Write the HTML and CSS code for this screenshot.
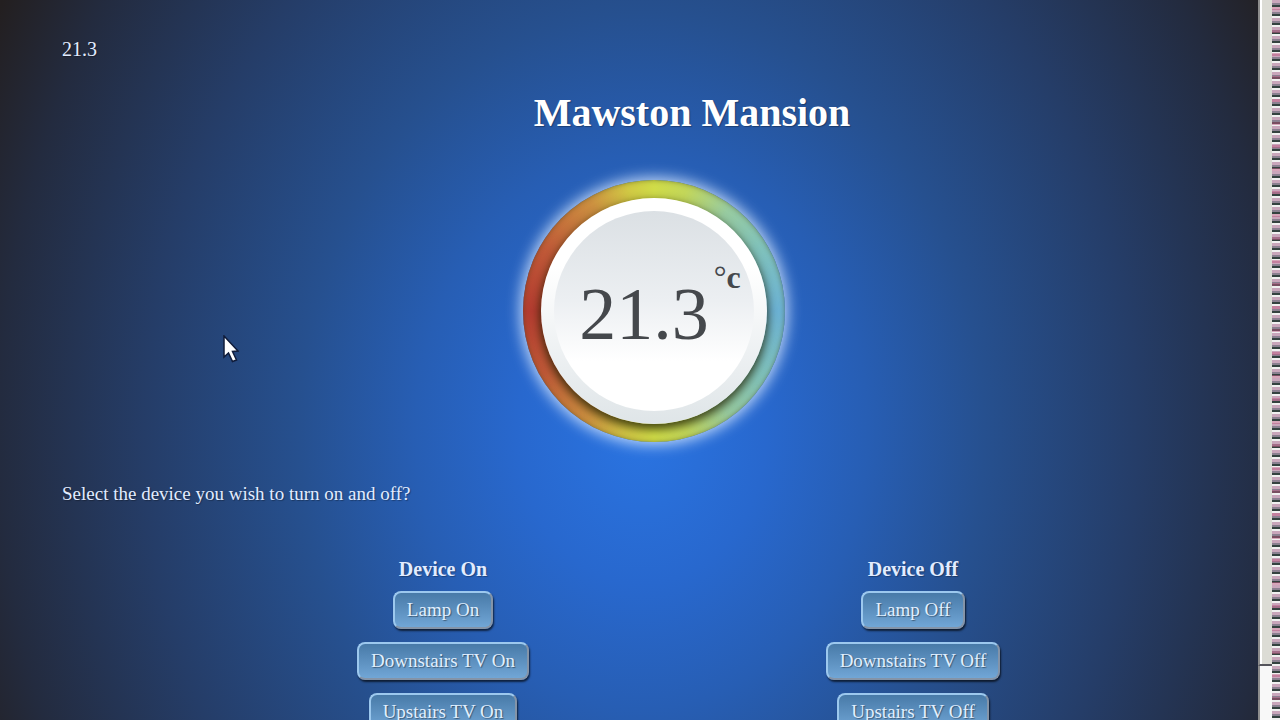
FILE: index.html
```
<!DOCTYPE html>
<html lang="en">
<head>
    <meta charset="UTF-8">
    <title>Mawston Mansion</title>
    <link rel="stylesheet" href="styles.css">
</head>
<body>
    <main class="page">
        <div class="reading">21.3</div>

        <h1 class="title">Mawston Mansion</h1>

        <div class="gauge">
            <div class="dial">
                <div class="face">
                    <span class="temp">21.3</span>
                    <span class="unit">&deg;<b>c</b></span>
                </div>
            </div>
        </div>

        <p class="question">Select the device you wish to turn on and off?</p>

        <table class="devices">
            <thead>
                <tr>
                    <th>Device On</th>
                    <th>Device Off</th>
                </tr>
            </thead>
            <tbody>
                <tr>
                    <td><button type="button">Lamp On</button></td>
                    <td><button type="button">Lamp Off</button></td>
                </tr>
                <tr>
                    <td><button type="button">Downstairs TV On</button></td>
                    <td><button type="button">Downstairs TV Off</button></td>
                </tr>
                <tr>
                    <td><button type="button">Upstairs TV On</button></td>
                    <td><button type="button">Upstairs TV Off</button></td>
                </tr>
            </tbody>
        </table>
    </main>

    <div class="scrollbar">
        <div class="thumb"></div>
        <div class="track"></div>
    </div>
    <div class="edge"></div>

    <svg class="cursor" width="16" height="28" viewBox="0 0 16 28">
        <path d="M1 1 L1 22 L5.5 18 L9.5 26.5 L13.5 25 L9.5 16.5 L15 16 Z" fill="#fff" stroke="#101c3a" stroke-width="1.5"/>
    </svg>
</body>
</html>
```
FILE: styles.css
```
body {
    margin: 0;
    height: 100vh;
    display: flex;
    overflow: hidden;
    font-family: "Liberation Serif", "Times New Roman", serif;
    font-size: 19px;
    color: #e2ecff;
    text-shadow: 1px 1px 1px rgba(0, 0, 0, 0.3);
}

.page {
    flex: 1;
    box-sizing: border-box;
    padding: 37px 12px 0 62px;
    background: radial-gradient(ellipse 58% 124% at 51% 60%, #2a74e2 0%, #2868ce 17%, #275eb4 31%, #26508f 47%, #253d68 68%, #232b3f 88%, #231f20 100%);
}

.reading {
    font-size: 20px;
    line-height: 24px;
}

.title {
    margin: 29px 0 0 0;
    padding-left: 76px;
    font-size: 40px;
    line-height: 46px;
    text-align: center;
    color: #fff;
}

/* coloured ring */
.gauge {
    width: 262px;
    height: 262px;
    margin: 44px auto 0;
    display: flex;
    align-items: center;
    justify-content: center;
    border-radius: 50%;
    background: conic-gradient(#d0dc48 0deg, #c2d65a 15deg, #98cba0 36deg, #80c2bc 60deg, #6cb2d4 90deg, #80c2bc 120deg, #98cba0 144deg, #c2d65a 165deg, #d0dc48 180deg, #d0c244 194deg, #cc9040 212deg, #c05a38 240deg, #b43c30 270deg, #c05a38 300deg, #cc9040 330deg, #d0c844 348deg, #d0dc48 360deg);
    box-shadow: 0 0 14px 3px rgba(215, 232, 255, 0.85), inset 0 0 5px rgba(60, 60, 20, 0.5);
}

.dial {
    width: 226px;
    height: 226px;
    display: flex;
    align-items: center;
    justify-content: center;
    border-radius: 50%;
    background: linear-gradient(#fff 0%, #fff 30%, #dfe5e8 100%);
    box-shadow: 0 4px 10px 1px rgba(30, 30, 0, 0.8);
}

.face {
    width: 200px;
    height: 200px;
    box-sizing: border-box;
    padding: 0 0 10px 12px;
    display: flex;
    align-items: center;
    justify-content: center;
    gap: 5px;
    border-radius: 50%;
    background: linear-gradient(#dbe0e4 0%, #eceff2 45%, #fff 75%);
    color: #45484c;
    text-shadow: none;
}

.temp {
    margin-top: 16px;
    font-size: 74px;
    line-height: 74px;
}

.unit {
    margin-bottom: 59px;
    font-size: 32px;
    line-height: 32px;
}

.question {
    margin: 40px 0 0;
    line-height: 24px;
}

.devices {
    width: calc(100% - 244px);
    margin: 50px 98px 0 146px;
    table-layout: fixed;
    border-collapse: collapse;
}

.devices th {
    padding: 0 0 9px;
    font-size: 20px;
    line-height: 26px;
}

.devices td {
    padding: 0 0 13px;
    text-align: center;
}

.devices button {
    display: inline-block;
    padding: 6px 12px;
    border: 2px solid;
    border-color: #9cc8ee #8494a8 #8494a8 #9cc8ee;
    border-radius: 8px;
    background: linear-gradient(#487aa8, #71a6d6);
    box-shadow: 1px 2px 2px rgba(0, 0, 0, 0.65);
    font-family: inherit;
    font-size: 19px;
    line-height: 22px;
    color: #e0efff;
    text-shadow: 1px 1px 1px rgba(0, 0, 0, 0.4);
    vertical-align: top;
    cursor: pointer;
}

.scrollbar {
    width: 14px;
    display: flex;
    flex-direction: column;
}

.thumb {
    flex: 37;
    border-left: 2px solid #8d8d8d;
    border-bottom: 2px solid #55555c;
    background: #dcdcd5;
    box-shadow: inset 2px 0 #fff;
}

.track {
    flex: 3;
    border-left: 2px solid #8d8d8d;
    background: #f8f8f8;
}

/* striped strip along the window edge */
.edge {
    width: 8px;
    background:
        repeating-linear-gradient(transparent 0 7px, rgba(190, 90, 130, 0.5) 7px 10px, transparent 10px 23px),
        repeating-linear-gradient(#c9a6bb 0 3px, #8a8090 3px 5px, #33423f 5px 7px, #f0f0f0 7px 9px);
}

.cursor {
    position: absolute;
    left: 223px;
    top: 335px;
}
```
